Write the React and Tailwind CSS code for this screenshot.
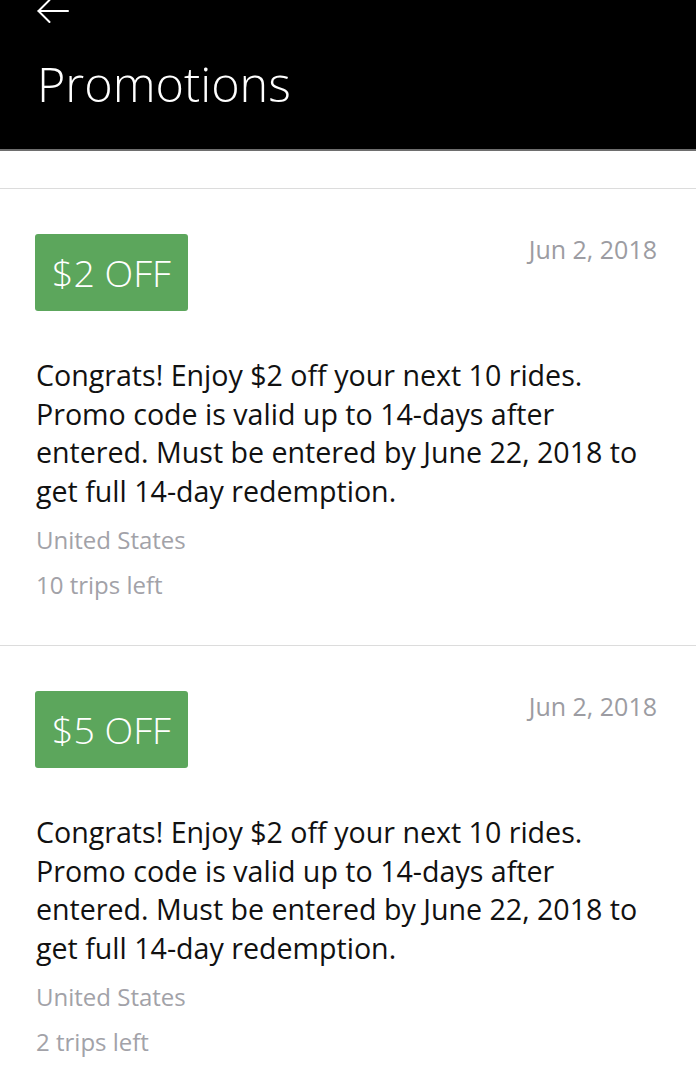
import React from "react";

const promos = [
  { amount: "$2 OFF", date: "Jun 2, 2018", trips: "10 trips left" },
  { amount: "$5 OFF", date: "Jun 2, 2018", trips: "2 trips left" },
];

function PromoCard({ amount, date, trips }) {
  return (
    <div className="border-t border-[#dcdcdc] pl-[35px] pr-[39px] pt-[45px] pb-[38px]">
      <div className="flex items-start justify-between">
        <div className="flex h-[77px] items-center rounded-[3px] bg-[#5ca65c] pl-[17px] pr-[17px] text-[37.5px] font-light leading-none text-white">
          {amount}
        </div>
        <div className="text-[25px] leading-[30px] text-[#9c9ca2]">{date}</div>
      </div>
      <p className="mt-[45px] pl-[1px] text-[28.6px] leading-[38.5px] text-[#111111]">
        Congrats! Enjoy $2 off your next 10 rides. Promo code is valid up to 14-days after entered. Must be entered by June 22, 2018 to get full 14-day redemption.
      </p>
      <div className="mt-[7px] pl-[1px] text-[24px] leading-[45px] text-[#a2a2a8]">
        <div>United States</div>
        <div>{trips}</div>
      </div>
    </div>
  );
}

export default function App() {
  return (
    <div
      className="min-h-[1092px] w-[696px] overflow-hidden bg-white"
      style={{ fontFamily: "'Open Sans', 'Noto Sans', sans-serif" }}
    >
      <header className="h-[150px] bg-black px-[37px]">
        <svg width="32" height="26" viewBox="0 0 32 26" className="block -mt-[1px]" fill="none" stroke="white" strokeWidth="2" strokeLinecap="round" strokeLinejoin="round">
          <path d="M31 12H1.5" />
          <path d="M12.5 1L1.5 12L12.5 23" />
        </svg>
        <h1 className="mt-[34px] text-[48.5px] font-light leading-none text-white">Promotions</h1>
      </header>
      <div className="h-[2px] bg-[#6e6e6e]" />
      <div className="h-[37px]" />
      {promos.map((p, i) => (
        <PromoCard key={i} {...p} />
      ))}
    </div>
  );
}
